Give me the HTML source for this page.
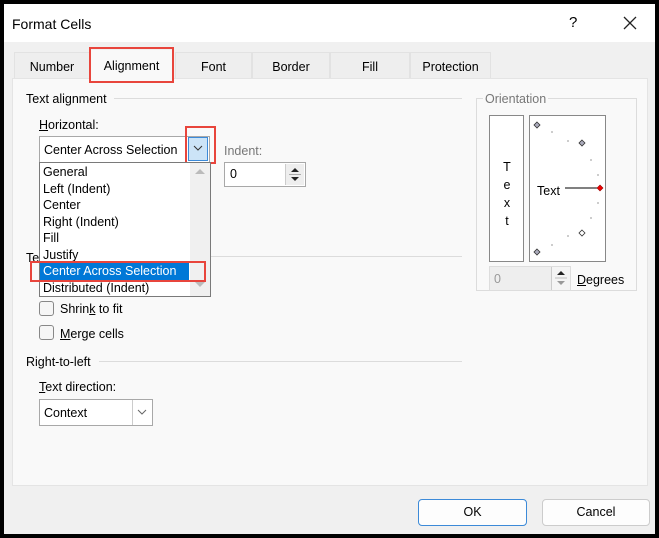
<!DOCTYPE html>
<html><head><style>
*{margin:0;padding:0;box-sizing:border-box}
body{width:659px;height:538px;background:#000;position:relative;overflow:hidden;font-family:"Liberation Sans",sans-serif;font-size:12.5px;color:#000}
.a{position:absolute}
.t{position:absolute;white-space:nowrap;line-height:16px}
.line{position:absolute;height:1px;background:#dcdcdc}
.box{position:absolute;background:#fff;border:1px solid #a8a8a8}
.red{position:absolute;border:2px solid #e8453c}
.tab{position:absolute;top:52px;height:27px;background:#eeeeee;border:1px solid #e2e2e2;border-bottom:none;text-align:center;line-height:28px;font-size:12.5px}
.cb{position:absolute;width:15px;height:15px;border:1px solid #888;border-radius:3px;background:#f6f6f6}
.btn{position:absolute;height:27px;border:1px solid #ccc;border-radius:4px;background:#fdfdfd;text-align:center;line-height:25px}
</style></head><body>
<div class="a" style="left:4px;top:4px;width:651px;height:530px;background:#f0f0f0"></div>
<div class="a" style="left:4px;top:4px;width:651px;height:38px;background:#fff"></div>
<div class="t" style="left:12px;top:16px;font-size:14px">Format Cells</div>
<div class="t" style="left:569px;top:15px;font-size:15px">?</div>
<svg class="a" style="left:623px;top:16px" width="14" height="14"><path d="M1 1L13 13M13 1L1 13" stroke="#222" stroke-width="1.3"/></svg>

<div class="tab" style="left:14px;width:76px">Number</div>
<div class="tab" style="left:175px;width:77px">Font</div>
<div class="tab" style="left:252px;width:78px">Border</div>
<div class="tab" style="left:330px;width:80px">Fill</div>
<div class="tab" style="left:410px;width:81px">Protection</div>
<div class="a" style="left:12px;top:78px;width:636px;height:408px;background:#f9f9f9;border:1px solid #e4e4e4"></div>
<div class="tab" style="left:90px;top:50px;width:83px;height:30px;background:#f9f9f9;border-color:#f9f9f9;line-height:30px">Alignment</div>
<div class="red" style="left:89px;top:47px;width:85px;height:36px"></div>

<div class="t" style="left:26px;top:91px">Text alignment</div>
<div class="line" style="left:114px;top:98px;width:348px"></div>
<div class="t" style="left:39px;top:117px"><u>H</u>orizontal:</div>
<div class="box" style="left:39px;top:136px;width:171px;height:27px"></div>
<div class="t" style="left:44px;top:142px">Center Across Selection</div>
<div class="a" style="left:188px;top:137px;width:20px;height:24px;background:#cce4f7;border:1px solid #3c8ad8"></div>
<svg class="a" style="left:193px;top:145px" width="10" height="6"><path d="M1 1L5 5L9 1" stroke="#333" fill="none"/></svg>
<div class="red" style="left:185px;top:126px;width:31px;height:38px"></div>
<div class="t" style="left:224px;top:143px;color:#777">Indent:</div>
<div class="box" style="left:224px;top:162px;width:82px;height:25px"></div>
<div class="t" style="left:230px;top:166px">0</div>
<div class="a" style="left:285px;top:164px;width:19px;height:21px;background:#eee;border-left:1px solid #ccc"></div>
<svg class="a" style="left:289px;top:166px" width="12" height="18"><path d="M2 6L6 2L10 6Z M2 11L6 15L10 11Z" fill="#222"/><path d="M0 8.5H12" stroke="#aaa"/></svg>

<div class="t" style="left:26px;top:250px">Te</div>
<div class="line" style="left:210px;top:256px;width:252px"></div>

<div class="box" style="left:39px;top:162px;width:172px;height:135px;border-color:#7a7a7a"></div>
<div class="a" style="left:190px;top:163px;width:20px;height:133px;background:#f0f0f0"></div>
<svg class="a" style="left:194px;top:167px" width="12" height="8"><path d="M1 7L6 2L11 7Z" fill="#bbb"/></svg>
<svg class="a" style="left:194px;top:281px" width="12" height="8"><path d="M1 1L6 6L11 1Z" fill="#bbb"/></svg>
<div class="a" style="left:40px;top:263px;width:149px;height:17px;background:#0078d7"></div>
<div class="t" style="left:43px;top:164px">General</div>
<div class="t" style="left:43px;top:181px">Left (Indent)</div>
<div class="t" style="left:43px;top:197px">Center</div>
<div class="t" style="left:43px;top:214px">Right (Indent)</div>
<div class="t" style="left:43px;top:230px">Fill</div>
<div class="t" style="left:43px;top:247px">Justify</div>
<div class="t" style="left:43px;top:263px;color:#fff">Center Across Selection</div>
<div class="t" style="left:43px;top:280px">Distributed (Indent)</div>
<div class="red" style="left:30px;top:261px;width:176px;height:21px"></div>

<div class="cb" style="left:39px;top:301px"></div>
<div class="t" style="left:60px;top:301px">Shrin<u>k</u> to fit</div>
<div class="cb" style="left:39px;top:325px"></div>
<div class="t" style="left:60px;top:326px"><u>M</u>erge cells</div>

<div class="t" style="left:26px;top:354px">Right-to-left</div>
<div class="line" style="left:99px;top:361px;width:363px"></div>
<div class="t" style="left:39px;top:379px"><u>T</u>ext direction:</div>
<div class="box" style="left:39px;top:399px;width:114px;height:27px"></div>
<div class="t" style="left:44px;top:405px">Context</div>
<div class="a" style="left:132px;top:400px;width:20px;height:25px;border-left:1px solid #ccc;background:#fff"></div>
<svg class="a" style="left:137px;top:409px" width="10" height="6"><path d="M1 1L5 5L9 1" stroke="#666" fill="none"/></svg>

<div class="a" style="left:476px;top:98px;width:161px;height:193px;border:1px solid #dcdcdc"></div>
<div class="t" style="left:483px;top:91px;color:#777;background:#f9f9f9;padding:0 2px">Orientation</div>
<div class="a" style="left:489px;top:115px;width:35px;height:147px;background:#fff;border:1px solid #888"></div>
<div class="t" style="left:503px;top:158px;line-height:18px;text-align:center;width:8px">T<br>e<br>x<br>t</div>
<div class="a" style="left:529px;top:115px;width:77px;height:147px;background:#fff;border:1px solid #888"></div>
<svg class="a" style="left:529px;top:115px" width="80" height="147">
<g fill="#aaa"><circle cx="23" cy="17" r="0.9"/><circle cx="39" cy="26" r="0.9"/><circle cx="62" cy="45" r="0.9"/><circle cx="69" cy="60" r="0.9"/><circle cx="69" cy="88" r="0.9"/><circle cx="62" cy="103" r="0.9"/><circle cx="39" cy="121" r="0.9"/><circle cx="23" cy="130" r="0.9"/></g>
<g fill="#aab" stroke="#333" stroke-width="0.8"><path d="M8 7L11 10L8 13L5 10Z"/><path d="M53 25L56 28L53 31L50 28Z"/><path d="M53 115L56 118L53 121L50 118Z" fill="#fff"/><path d="M8 134L11 137L8 140L5 137Z"/></g>
<path d="M36 73H69" stroke="#000"/><path d="M71 70L74 73L71 76L68 73Z" fill="#e00" stroke="#900" stroke-width="0.6"/>
</svg>
<div class="t" style="left:537px;top:183px">Text</div>
<div class="a" style="left:489px;top:266px;width:82px;height:25px;background:#eee;border:1px solid #ddd"></div>
<div class="t" style="left:494px;top:271px;color:#999">0</div>
<div class="a" style="left:551px;top:267px;width:19px;height:23px;background:#f4f4f4;border-left:1px solid #ccc"></div>
<svg class="a" style="left:555px;top:268px" width="12" height="20"><path d="M2 7L6 3L10 7Z" fill="#222"/><path d="M2 13L6 17L10 13Z" fill="#999"/><path d="M0 10H12" stroke="#bbb"/></svg>
<div class="t" style="left:577px;top:272px"><u>D</u>egrees</div>

<div class="btn" style="left:418px;top:499px;width:109px;border:1px solid #3c8ad8">OK</div>
<div class="btn" style="left:542px;top:499px;width:108px">Cancel</div>
</body></html>
